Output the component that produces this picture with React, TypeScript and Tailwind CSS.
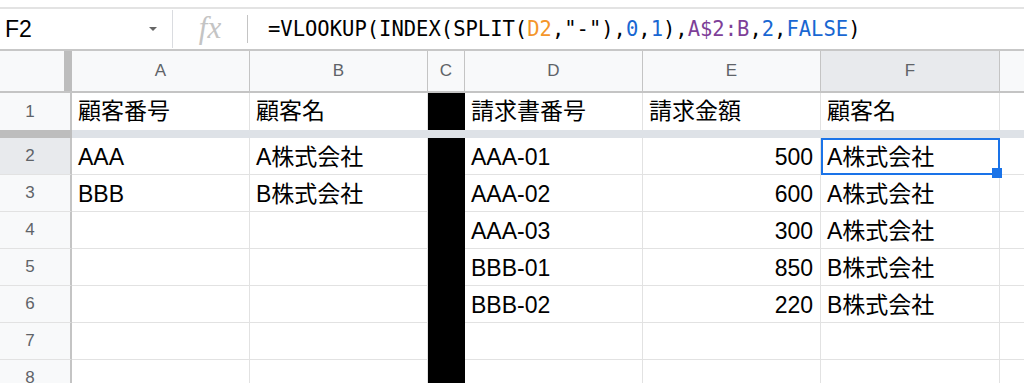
import React from "react";

const cols = [
  { key: "A", w: "w-[178px]" },
  { key: "B", w: "w-[178px]" },
  { key: "C", w: "w-[37px]" },
  { key: "D", w: "w-[178px]" },
  { key: "E", w: "w-[178px]" },
  { key: "F", w: "w-[179px]" },
];

type Row = { n: number; cells: (string | null)[]; };

const rows: Row[] = [
  { n: 2, cells: ["AAA", "A株式会社", null, "AAA-01", "500", "A株式会社"] },
  { n: 3, cells: ["BBB", "B株式会社", null, "AAA-02", "600", "A株式会社"] },
  { n: 4, cells: ["", "", null, "AAA-03", "300", "A株式会社"] },
  { n: 5, cells: ["", "", null, "BBB-01", "850", "B株式会社"] },
  { n: 6, cells: ["", "", null, "BBB-02", "220", "B株式会社"] },
  { n: 7, cells: ["", "", null, "", "", ""] },
  { n: 8, cells: ["", "", null, "", "", ""] },
];

function FormulaBar() {
  return (
    <div className="h-[44px] border-t-2 border-b-2 border-t-[#e3e3e3] border-b-[#c7c7c7] flex items-stretch">
      <div className="w-[172px] flex items-center justify-between pl-[5px] pr-[15px]">
        <div className="text-[23px] text-black leading-[28px]">F2</div>
        <span className="w-0 h-0 border-l-[4px] border-r-[4px] border-t-[4px] border-l-transparent border-r-transparent border-t-[#666666]" />
      </div>
      <div className="w-[1px] bg-[#dadce0] my-[1px]" />
      <div className="w-[74px] flex items-center justify-center">
        <span className="text-[31px] leading-none italic text-[#c4c4c4] pb-[3px]" style={{ fontFamily: '"Liberation Serif", serif' }}>
          fx
        </span>
      </div>
      <div className="w-[1px] bg-[#c4c4c4] my-[6px]" />
      <div
        className="flex items-center pl-[20px] text-[20.5px] text-black whitespace-pre pt-[1px]"
        style={{ fontFamily: '"DejaVu Sans Mono", monospace' }}
      >
        <span>=VLOOKUP(INDEX(SPLIT(</span>
        <span className="text-[#f4962a]">D2</span>
        <span>,"-"),</span>
        <span className="text-[#1967d2]">0</span>
        <span>,</span>
        <span className="text-[#1967d2]">1</span>
        <span>),</span>
        <span className="text-[#7e3f98]">A$2:B</span>
        <span>,</span>
        <span className="text-[#1967d2]">2</span>
        <span>,</span>
        <span className="text-[#1967d2]">FALSE</span>
        <span>)</span>
      </div>
    </div>
  );
}

function HeaderRow() {
  return (
    <div className="flex h-[42px] border-b-2 border-[#c4c4c4]">
      <div className="w-[72px] flex shrink-0">
        <div className="w-[64px] bg-[#f8f9fa]" />
        <div className="w-[8px] bg-[#bdbdbd]" />
      </div>
      {cols.map((c) => (
        <div
          key={c.key}
          className={`${c.w} shrink-0 border-r border-[#c4c4c4] flex items-center justify-center text-[17px] text-[#5f6368] ${
            c.key === "F" ? "bg-[#e8eaed]" : "bg-[#f8f9fa]"
          }`}
        >
          {c.key}
        </div>
      ))}
      <div className="flex-1 bg-[#f8f9fa]" />
    </div>
  );
}

function RowHeader({ n, active, last }: { n: number; active?: boolean; last?: boolean }) {
  return (
    <div
      className={`w-[72px] shrink-0 border-r-2 border-r-[#c4c4c4] ${last ? "" : "border-b border-b-[#e2e2e2]"} flex items-center justify-center pr-[10px] text-[17px] text-[#5f6368] ${
        active ? "bg-[#e8eaed]" : "bg-[#f8f9fa]"
      }`}
    >
      {n}
    </div>
  );
}

function Row1() {
  const texts = ["顧客番号", "顧客名", null, "請求書番号", "請求金額", "顧客名"];
  return (
    <div className="flex h-[37px]">
      <RowHeader n={1} last />
      {cols.map((c, i) => {
        const t = texts[i];
        if (t === null)
          return <div key={c.key} className={`${c.w} shrink-0 bg-black`} />;
        return (
          <div
            key={c.key}
            className={`${c.w} shrink-0 border-r border-[#e2e2e2] pl-[6px] text-[23px] leading-[37px] text-black whitespace-nowrap overflow-hidden`}
          >
            {t}
          </div>
        );
      })}
      <div className="flex-1" />
    </div>
  );
}

function DataRow({ row }: { row: Row }) {
  return (
    <div className="flex h-[37px]">
      <RowHeader n={row.n} active={row.n === 2} />
      {cols.map((c, i) => {
        const t = row.cells[i];
        if (t === null)
          return <div key={c.key} className={`${c.w} shrink-0 bg-black`} />;
        const right = c.key === "E";
        return (
          <div
            key={c.key}
            className={`${c.w} shrink-0 relative border-r border-b border-[#e2e2e2] text-[23px] leading-[36px] pt-[1px] text-black whitespace-nowrap ${
              right ? "text-right pr-[7px]" : "pl-[6px]"
            }`}
          >
            {t}
            {row.n === 2 && c.key === "F" && (
              <div className="absolute top-0 left-0 right-[-1px] bottom-[-1px] border-2 border-[#1a73e8] z-10">
                <div className="absolute right-[-4px] bottom-[-5px] w-[10px] h-[10px] bg-[#1a73e8]" />
              </div>
            )}
          </div>
        );
      })}
      <div className="flex-1 border-b border-[#e2e2e2]" />
    </div>
  );
}

export default function App() {
  return (
    <div
      className="w-[1024px] h-[383px] overflow-hidden bg-white relative"
      style={{ fontFamily: '"Liberation Sans", "Noto Sans CJK JP", sans-serif' }}
    >
      <div className="h-[7px]" />
      <FormulaBar />
      <HeaderRow />
      <Row1 />
      <div className="flex h-[8px]">
        <div className="w-[72px] shrink-0 bg-[#bdbdbd]" />
        <div className="flex-1 bg-[#dee2e7]" />
      </div>
      {rows.map((r) => (
        <DataRow key={r.n} row={r} />
      ))}
    </div>
  );
}
